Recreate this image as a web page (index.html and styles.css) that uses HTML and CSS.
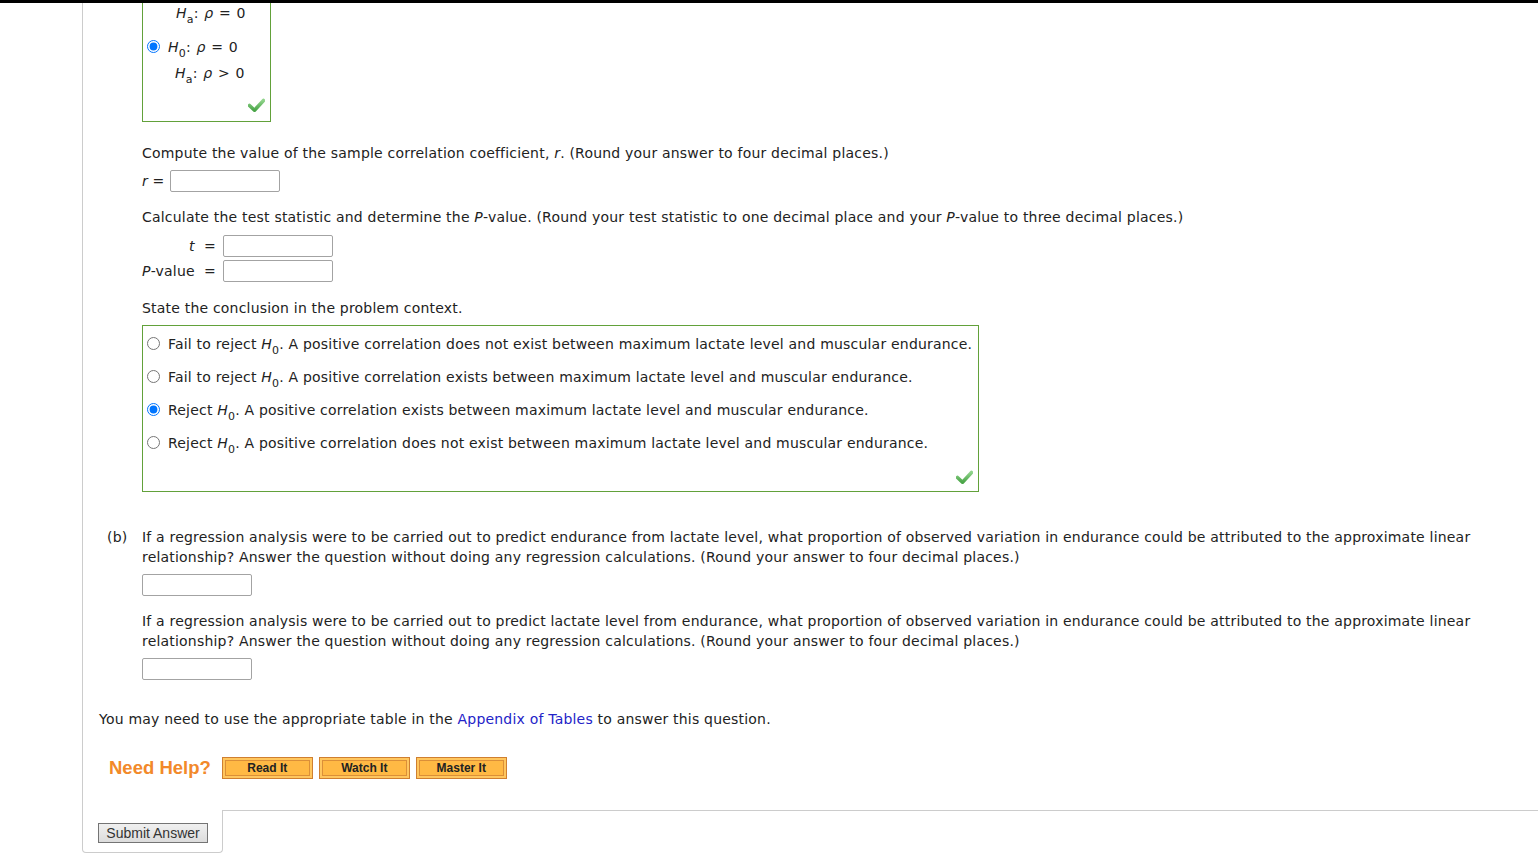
FILE: index.html
```html
<!DOCTYPE html>
<html>
<head>
<meta charset="utf-8">
<link rel="stylesheet" href="styles.css">
</head>
<body>
<div class="topbar"></div>
<div class="page">
  <div class="question">
    <div class="part-a">
      <div class="choice-box hyp-box">
        <div class="hyp-line hyp-indent"><span class="m">H<span class="sub">a</span></span>: <span class="m">ρ</span> = 0</div>
        <label class="hyp-option">
          <input type="radio" name="hyp" class="radio" checked>
          <span class="hyp-text">
            <span class="hyp-line"><span class="m">H<span class="sub">0</span></span>: <span class="m">ρ</span> = 0</span>
            <span class="hyp-line hyp-second"><span class="m">H<span class="sub">a</span></span>: <span class="m">ρ</span> &gt; 0</span>
          </span>
        </label>
        <div class="check-row">
          <svg class="check" width="17" height="16" viewBox="0 0 17 16"><defs><linearGradient id="g1" x1="0" y1="0" x2="0" y2="1"><stop offset="0" stop-color="#8fd38a"/><stop offset="1" stop-color="#4aa548"/></linearGradient></defs><path d="M1.5 8.5 L6.5 13.2 L15.5 3.5" fill="none" stroke="url(#g1)" stroke-width="3.6" stroke-linecap="round" stroke-linejoin="round"/></svg>
        </div>
      </div>

      <p class="text compute">Compute the value of the sample correlation coefficient, <span class="m">r</span>. (Round your answer to four decimal places.)</p>
      <div class="r-row">
        <span class="lbl"><span class="m">r</span> =</span>
        <input class="answer" type="text">
      </div>

      <p class="text calc">Calculate the test statistic and determine the <span class="m">P</span>-value. (Round your test statistic to one decimal place and your <span class="m">P</span>-value to three decimal places.)</p>
      <div class="stat-grid">
        <span class="stat-lbl"><span class="m">t</span>&nbsp; =</span>
        <input class="answer" type="text">
        <span class="stat-lbl"><span class="m">P</span>-value&nbsp; =</span>
        <input class="answer" type="text">
      </div>

      <p class="text state">State the conclusion in the problem context.</p>
      <div class="choice-box concl-box">
        <label class="concl-option"><input type="radio" name="c" class="radio"><span>Fail to reject <span class="m">H<span class="sub">0</span></span>. A positive correlation does not exist between maximum lactate level and muscular endurance.</span></label>
        <label class="concl-option"><input type="radio" name="c" class="radio"><span>Fail to reject <span class="m">H<span class="sub">0</span></span>. A positive correlation exists between maximum lactate level and muscular endurance.</span></label>
        <label class="concl-option"><input type="radio" name="c" class="radio" checked><span>Reject <span class="m">H<span class="sub">0</span></span>. A positive correlation exists between maximum lactate level and muscular endurance.</span></label>
        <label class="concl-option"><input type="radio" name="c" class="radio"><span>Reject <span class="m">H<span class="sub">0</span></span>. A positive correlation does not exist between maximum lactate level and muscular endurance.</span></label>
        <div class="check-row check-row2">
          <svg class="check" width="17" height="16" viewBox="0 0 17 16"><defs><linearGradient id="g2" x1="0" y1="0" x2="0" y2="1"><stop offset="0" stop-color="#8fd38a"/><stop offset="1" stop-color="#4aa548"/></linearGradient></defs><path d="M1.5 8.5 L6.5 13.2 L15.5 3.5" fill="none" stroke="url(#g2)" stroke-width="3.6" stroke-linecap="round" stroke-linejoin="round"/></svg>
        </div>
      </div>
    </div>

    <div class="part-b">
      <span class="part-label">(b)</span>
      <div class="part-body">
        <p class="text">If a regression analysis were to be carried out to predict endurance from lactate level, what proportion of observed variation in endurance could be attributed to the approximate linear relationship? Answer the question without doing any regression calculations. (Round your answer to four decimal places.)</p>
        <input class="answer b-input" type="text">
        <p class="text b-second">If a regression analysis were to be carried out to predict lactate level from endurance, what proportion of observed variation in endurance could be attributed to the approximate linear relationship? Answer the question without doing any regression calculations. (Round your answer to four decimal places.)</p>
        <input class="answer b-input" type="text">
      </div>
    </div>

    <p class="text appendix">You may need to use the appropriate table in the <a class="link" href="#">Appendix of Tables</a> to answer this question.</p>

    <div class="help-row">
      <span class="need-help">Need Help?</span>
      <button class="help-btn">Read It</button>
      <button class="help-btn">Watch It</button>
      <button class="help-btn">Master It</button>
    </div>
  </div>
  <div class="footer">
    <div class="submit-cell"><button class="submit">Submit Answer</button></div>
    <div class="filler"></div>
  </div>
</div>
</body>
</html>
```
FILE: styles.css
```css
html, body {
  margin: 0;
  padding: 0;
  background: #fff;
}
body {
  font-family: "DejaVu Sans", Verdana, sans-serif;
  font-size: 14px;
  letter-spacing: 0.2px;
  color: #222;
}
.topbar {
  height: 3px;
  background: #000;
}
.page {
  margin-left: 82px;
}
.question {
  border-left: 1px solid #cccccc;
  padding: 0 10px 31px 16px;
}
.part-a {
  margin-left: 43px;
}
.text {
  margin: 0;
  line-height: 20px;
}
.m {
  font-style: italic;
}
.sub {
  font-style: normal;
  font-size: 11px;
  vertical-align: -5px;
  line-height: 0;
}
.choice-box {
  border: 1px solid #62a13a;
  box-sizing: border-box;
}
.hyp-box {
  border-top: none;
  width: 129px;
  padding-left: 4px;
  word-spacing: 1px;
}
.hyp-line {
  display: block;
  line-height: 20px;
}
.hyp-indent {
  padding-left: 29px;
}
.hyp-option {
  display: flex;
  align-items: flex-start;
  margin-top: 14px;
}
.radio {
  width: 13px;
  height: 13px;
  margin: 0;
  flex: none;
}
.hyp-option .radio {
  margin-top: 3px;
}
.hyp-text {
  display: block;
  margin-left: 8px;
}
.hyp-second {
  margin-top: 6px;
  padding-left: 7px;
}
.check-row {
  display: flex;
  justify-content: flex-end;
  padding: 14px 5px 8px 0;
}
.check {
  display: block;
}
.compute {
  margin-top: 21px;
}
.r-row {
  display: flex;
  align-items: center;
  gap: 5px;
  margin-top: 7px;
}
.lbl {
  line-height: 22px;
}
.answer {
  box-sizing: border-box;
  width: 110px;
  height: 22px;
  margin: 0;
  border: 1px solid #a3a3a3;
  border-radius: 2px;
  background: #fff;
  padding: 0 3px;
  font: inherit;
}
.calc {
  margin-top: 15px;
}
.stat-grid {
  display: grid;
  grid-template-columns: 74px 110px;
  column-gap: 7px;
  row-gap: 3px;
  align-items: center;
  margin-top: 8px;
}
.stat-lbl {
  text-align: right;
  line-height: 22px;
}
.state {
  margin-top: 16px;
}
.concl-box {
  margin-top: 7px;
  width: 837px;
  padding: 1px 0 0 4px;
}
.concl-option {
  display: flex;
  align-items: center;
  gap: 8px;
  height: 33px;
}
.check-row2 {
  padding: 10px 5px 6px 0;
}
.part-b {
  display: grid;
  grid-template-columns: 43px 1fr;
  margin-top: 35px;
}
.part-label {
  padding-left: 8px;
  line-height: 20px;
}
.b-input {
  display: block;
  margin-top: 7px;
}
.b-second {
  margin-top: 15px;
}
.appendix {
  margin-top: 29px;
}
.link {
  color: #2323c8;
  text-decoration: none;
}
.help-row {
  display: flex;
  align-items: center;
  margin-top: 28px;
  padding-left: 10px;
  letter-spacing: 0;
}
.need-help {
  font-family: "Liberation Sans", Arial, sans-serif;
  font-weight: bold;
  font-size: 18.5px;
  color: #f2892a;
  margin-right: 11px;
}
.help-btn {
  box-sizing: border-box;
  width: 91px;
  height: 22px;
  margin: 0 6px 0 0;
  padding: 0;
  border: 1px solid #cf7f30;
  background: #ffb944;
  box-shadow: inset 0 0 0 2px #ffc65e, inset 0 0 0 3px #db8f38;
  font-family: "Liberation Sans", Arial, sans-serif;
  font-weight: bold;
  font-size: 12px;
  color: #222;
}
.footer {
  display: flex;
}
.submit-cell {
  box-sizing: border-box;
  width: 141px;
  border: 1px solid #cccccc;
  border-top: none;
  border-radius: 0 0 4px 4px;
  padding: 13px 0 9px 15px;
}
.submit {
  box-sizing: border-box;
  width: 110px;
  height: 20px;
  margin: 0;
  padding: 0;
  border: 1px solid #747474;
  background: linear-gradient(#f0f0f0, #dcdcdc);
  font-family: "Liberation Sans", Arial, sans-serif;
  font-size: 14px;
  letter-spacing: 0;
  color: #333;
}
.filler {
  flex: 1;
  border-top: 1px solid #cccccc;
}
```
